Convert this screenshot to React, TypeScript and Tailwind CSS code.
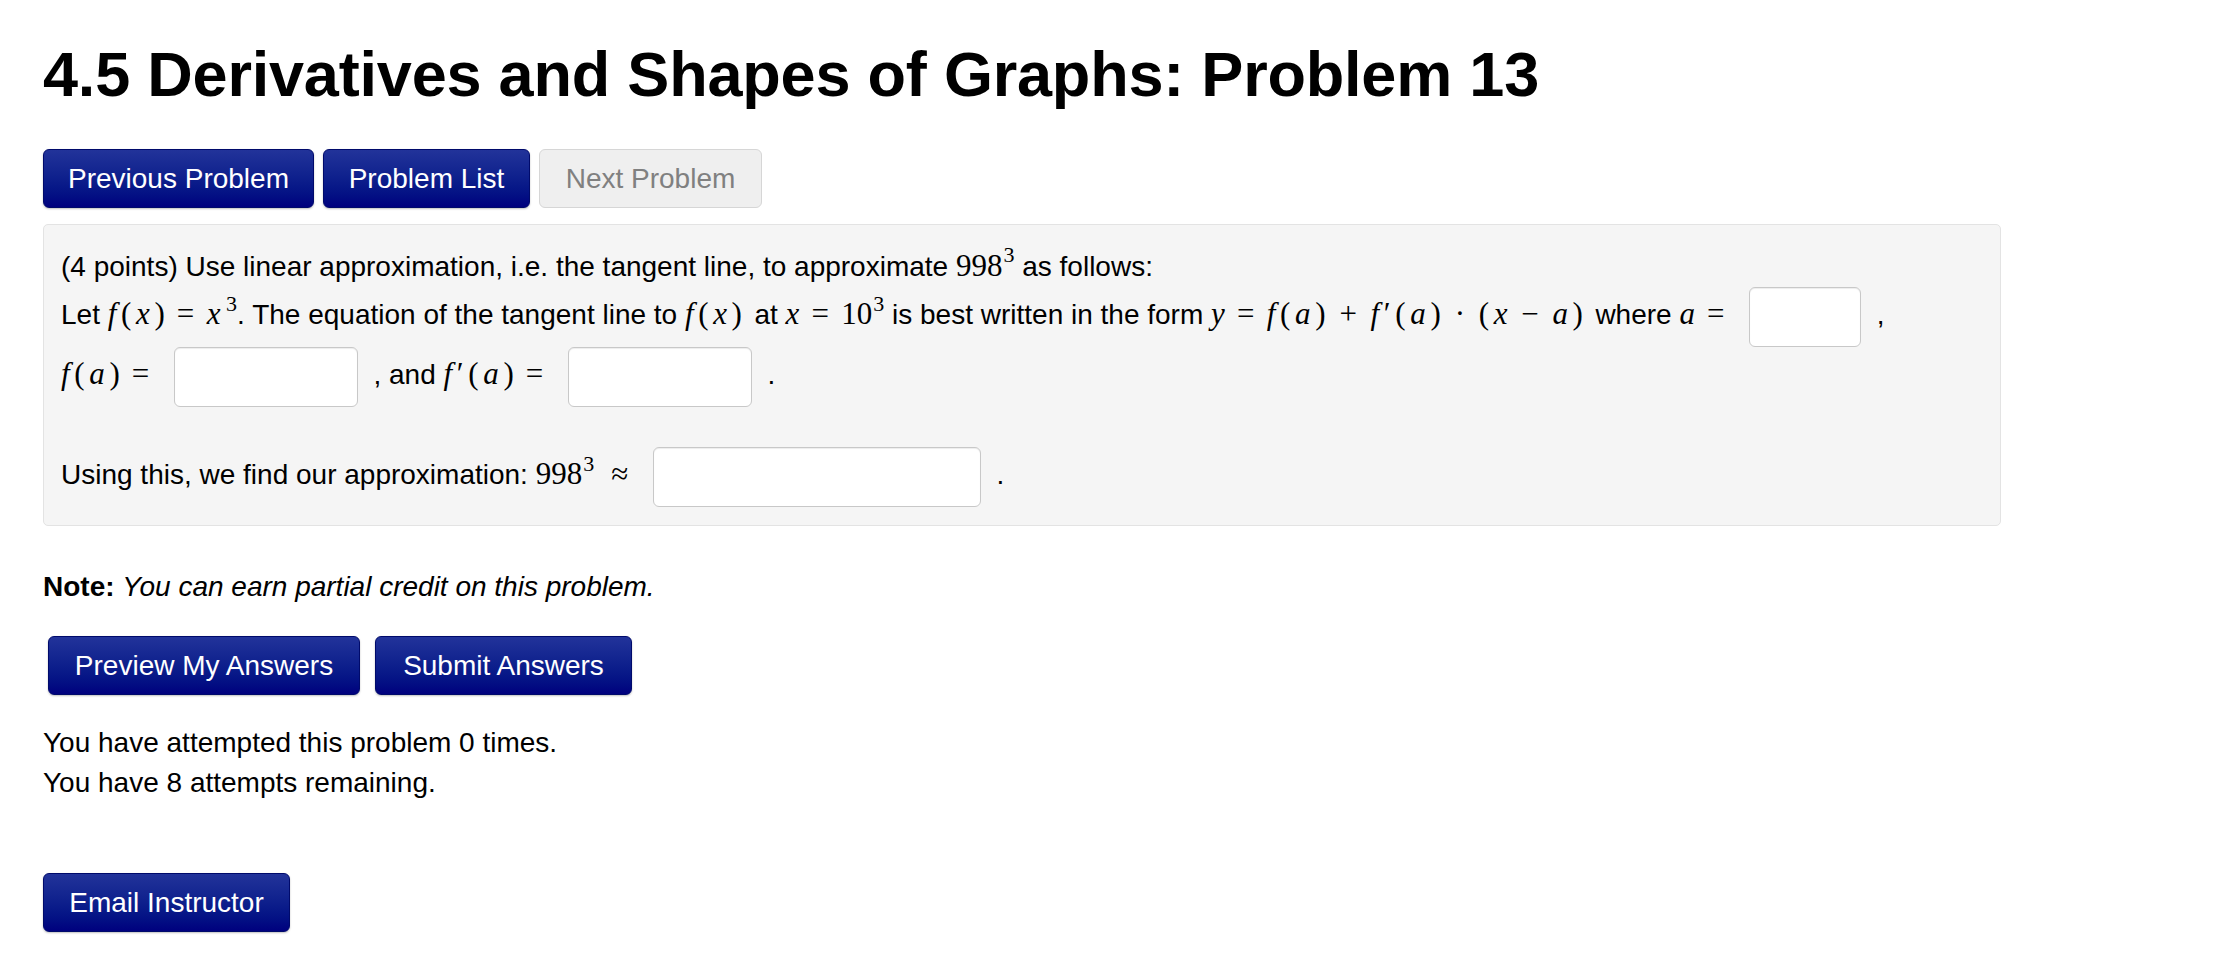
import React from "react";

const sans = "font-['Liberation_Sans',Arial,Helvetica,sans-serif]";

// MathJax-ish pieces
function V({ children }: { children: React.ReactNode }) {
  return (
    <span className="font-['Liberation_Serif','Times_New_Roman',serif] italic tracking-[0.15em]">{children}</span>
  );
}

// parens, prime
function N({ children }: { children: React.ReactNode }) {
  return (
    <span className="font-['Liberation_Serif','Times_New_Roman',serif] not-italic tracking-[0.15em]">{children}</span>
  );
}

// digits
function D({ children }: { children: React.ReactNode }) {
  return <span className="font-['Liberation_Serif','Times_New_Roman',serif] not-italic">{children}</span>;
}

function Rel({ children }: { children: React.ReactNode }) {
  return <span className="font-['Liberation_Serif','Times_New_Roman',serif] ml-[0.24em] mr-[0.4em]">{children}</span>;
}

function Bin({ children }: { children: React.ReactNode }) {
  return <span className="font-['Liberation_Serif','Times_New_Roman',serif] ml-[0.3em] mr-[0.44em]">{children}</span>;
}

function Sup({ children }: { children: React.ReactNode }) {
  return (
    <sup className="font-['Liberation_Serif','Times_New_Roman',serif] text-[22px] top-[-0.62em] ml-[1px]">
      {children}
    </sup>
  );
}

function M({ children }: { children: React.ReactNode }) {
  return <span className="text-[31px] whitespace-nowrap">{children}</span>;
}

function Blank({ w }: { w: string }) {
  return (
    <span
      className={`inline-block align-middle h-[60px] ml-[12px] mr-[8px] rounded-[6px] border border-[#c8c8c8] bg-white shadow-[inset_0_1px_1px_rgba(0,0,0,0.075)] ${w}`}
    />
  );
}

function NavyButton({ label, w }: { label: string; w: string }) {
  return (
    <button
      className={`h-[59px] ${w} rounded-[6px] border border-[#000a6b] bg-gradient-to-b from-[#22339a] to-[#00007e] text-[28px] text-white shadow-[0_1px_2px_rgba(0,0,0,0.25)] ${sans}`}
    >
      {label}
    </button>
  );
}

export default function App() {
  return (
    <div className={`min-h-[966px] bg-white pl-[43px] text-[28px] leading-[40px] text-black ${sans}`}>
      <h1 className="pt-[39px] text-[63px] font-bold leading-[70px] tracking-[-0.2px]">
        4.5 Derivatives and Shapes of Graphs: Problem 13
      </h1>

      {/* problem navigation */}
      <div className="mt-[40px] flex gap-[9px]">
        <NavyButton label="Previous Problem" w="w-[271px]" />
        <NavyButton label="Problem List" w="w-[207px]" />
        <button
          className={`h-[59px] w-[223px] rounded-[6px] border border-[#d6d6d6] bg-[#efefef] text-[28px] text-[#808080] ${sans}`}
        >
          Next Problem
        </button>
      </div>

      {/* problem body */}
      <div className="mt-[16px] w-[1958px] rounded-[5px] border border-[#e3e3e3] bg-[#f5f5f5] pl-[17px] pt-[21px] pb-[18px]">
        <div>
          (4 points) Use linear approximation, i.e. the tangent line, to approximate{" "}
          <M>
            <D>998</D>
            <Sup>3</Sup>
          </M>{" "}
          as follows:
        </div>
        <div>
          Let{" "}
          <M>
            <V>f</V>
            <N>(</N>
            <V>x</V>
            <N>)</N>
            <Rel>=</Rel>
            <V>x</V>
            <Sup>3</Sup>
          </M>
          . The equation of the tangent line to{" "}
          <M>
            <V>f</V>
            <N>(</N>
            <V>x</V>
            <N>)</N>
          </M>{" "}
          at{" "}
          <M>
            <V>x</V>
            <Rel>=</Rel>
            <D>10</D>
            <Sup>3</Sup>
          </M>{" "}
          is best written in the form{" "}
          <M>
            <V>y</V>
            <Rel>=</Rel>
            <V>f</V>
            <N>(</N>
            <V>a</V>
            <N>)</N>
            <Bin>+</Bin>
            <V>f</V>
            <N>′(</N>
            <V>a</V>
            <N>)</N>
            <Bin>·</Bin>
            <N>(</N>
            <V>x</V>
            <Bin>−</Bin>
            <V>a</V>
            <N>)</N>
          </M>{" "}
          where{" "}
          <M>
            <V>a</V>
            <Rel>=</Rel>
          </M>
          <Blank w="w-[112px]" /> ,
        </div>
        <div>
          <M>
            <V>f</V>
            <N>(</N>
            <V>a</V>
            <N>)</N>
            <Rel>=</Rel>
          </M>
          <Blank w="w-[184px]" /> , and{" "}
          <M>
            <V>f</V>
            <N>′(</N>
            <V>a</V>
            <N>)</N>
            <Rel>=</Rel>
          </M>
          <Blank w="w-[184px]" /> .
        </div>
        <div className="h-[40px]" />
        <div>
          Using this, we find our approximation:{" "}
          <M>
            <D>998</D>
            <Sup>3</Sup>
            <span className="font-['Liberation_Serif','Times_New_Roman',serif] ml-[0.55em] mr-[0.4em]">≈</span>
          </M>
          <Blank w="w-[328px]" /> .
        </div>
      </div>

      <p className="mt-[41px]">
        <span className="font-bold">Note:</span> <i>You can earn partial credit on this problem.</i>
      </p>

      <div className="mt-[29px] ml-[5px] flex gap-[15px]">
        <NavyButton label="Preview My Answers" w="w-[312px]" />
        <NavyButton label="Submit Answers" w="w-[257px]" />
      </div>

      <div className="mt-[28px]">
        <div>You have attempted this problem 0 times.</div>
        <div>You have 8 attempts remaining.</div>
      </div>

      <div className="mt-[70px]">
        <NavyButton label="Email Instructor" w="w-[247px]" />
      </div>
    </div>
  );
}
